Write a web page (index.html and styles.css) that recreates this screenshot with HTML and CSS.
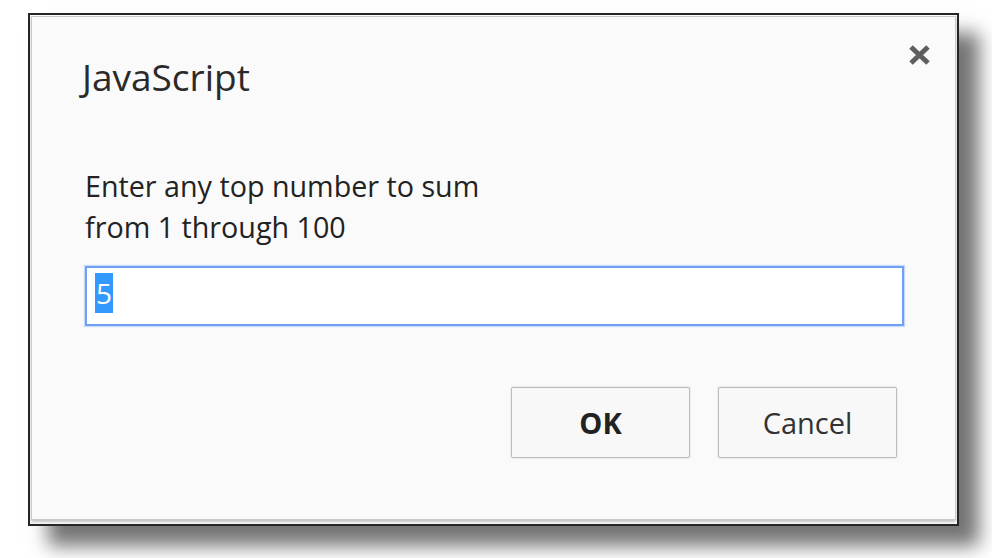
FILE: index.html
```html
<!DOCTYPE html>
<html lang="en">
<head>
    <meta charset="UTF-8">
    <meta name="viewport" content="width=device-width, initial-scale=1.0">
    <title>JavaScript prompt</title>
    <link rel="stylesheet" href="styles.css">
</head>
<body>

<div class="frame">
    <div class="dialog">
        <button class="close" aria-label="Close">
            <svg width="23" height="20" viewBox="0 0 23 20">
                <path d="M3 2 L20 18 M20 2 L3 18" stroke="#5f5f5f" stroke-width="5" fill="none"/>
            </svg>
        </button>

        <h1 class="title">JavaScript</h1>

        <p class="message">Enter any top number to sum<br>from 1 through 100</p>

        <div class="prompt-input"><span class="sel">5</span></div>

        <div class="buttons">
            <button class="btn btn-ok">OK</button>
            <button class="btn">Cancel</button>
        </div>
    </div>
</div>

</body>
</html>
```

FILE: styles.css
```css
body {
    margin: 0;
    min-height: 100vh;
    box-sizing: border-box;
    padding: 13px 0 0 28px;
    background: #fff;
    font-family: "Open Sans", "Noto Sans", sans-serif;
    color: #222;
}

.frame {
    width: 925px;
    padding: 1px 1px 4px 1px;
    border: 2px solid #262626;
    background: #fff;
    box-shadow: 20px 20px 18px rgba(0, 0, 0, 0.55);
}

.dialog {
    position: relative;
    padding: 38px 51px 61px 53px;
    border: 1px solid #c9c9c9;
    background: #fafafa;
    box-shadow: 0 2px 3px rgba(0, 0, 0, 0.25);
}

.close {
    position: absolute;
    top: 28px;
    right: 24px;
    padding: 0;
    border: none;
    background: none;
    line-height: 0;
    cursor: pointer;
}

.close svg {
    display: block;
    filter: blur(0.4px);
}

.title {
    margin: 0 0 66px -3px;
    font-size: 37px;
    font-weight: normal;
    line-height: 44px;
    color: #2a2a2a;
}

.message {
    margin: 0 0 19px;
    font-size: 28.7px;
    line-height: 41px;
}

.prompt-input {
    height: 56px;
    padding: 0 8px;
    border: 2px solid #6f9ff6;
    box-shadow: 0 0 1px 1px rgba(111, 159, 246, 0.35);
    background: #fff;
}

.sel {
    display: inline-block;
    margin-top: 5px;
    height: 40px;
    padding: 0 1px;
    line-height: 40px;
    font-size: 28px;
    background: #3399ff;
    color: #fff;
}

.buttons {
    display: flex;
    justify-content: flex-end;
    gap: 28px;
    margin-top: 61px;
    padding-right: 7px;
}

.btn {
    width: 179px;
    height: 71px;
    border: 1px solid #bdbdbd;
    border-radius: 2px;
    box-shadow: 0 0 1px 1px rgba(0, 0, 0, 0.06);
    background: #f8f8f8;
    font-family: "Open Sans", "Noto Sans", sans-serif;
    font-size: 29px;
    color: #333;
    cursor: pointer;
}

.btn-ok {
    font-weight: bold;
    color: #222;
}
```
